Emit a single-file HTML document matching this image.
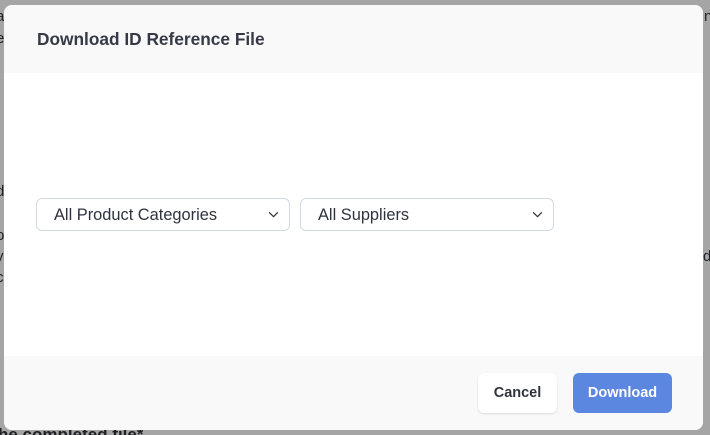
<!DOCTYPE html>
<html style="overflow:hidden;height:435px"><head><meta charset="utf-8"><style>
*{box-sizing:border-box;margin:0;padding:0}
body{width:710px;height:435px;overflow:hidden;background:#a5a5a5;font-family:"Liberation Sans",Arial,sans-serif;position:relative}
.bg{position:absolute;color:#1f2024;font-size:15px}
.modal{position:absolute;left:4px;top:5px;width:699px;height:425px;background:#fff;border-radius:8px;overflow:hidden}
.hd{height:68px;background:#f9f9f9;padding:24px 0 0 33px;font-size:17.3px;font-weight:bold;color:#363a47}
.sel{position:absolute;top:193px;height:33px;border:1px solid #d4d9e3;border-radius:6px;font-size:16.4px;color:#2f3340;padding:7px 0 0 17px}
.sel svg{position:absolute;right:10px;top:12px}
.ft{position:absolute;left:0;right:0;bottom:0;height:74px;background:#f9f9f9}
.btn{position:absolute;top:17px;height:40px;border-radius:6px;font-size:14.5px;font-weight:bold;text-align:center;line-height:40px}
</style></head><body>
<div class="bg" style="left:-4px;top:8px">a</div>
<div class="bg" style="left:-4px;top:30px">e</div>
<div class="bg" style="left:704px;top:8px">n</div>
<div class="bg" style="left:-4px;top:183px">d</div>
<div class="bg" style="left:-4px;top:227px">o</div>
<div class="bg" style="left:-4px;top:248px">y</div>
<div class="bg" style="left:-4px;top:269px">c</div>
<div class="bg" style="left:703px;top:248px">d</div>
<div class="bg" style="left:-2px;top:425px;height:10px;overflow:hidden;font-size:17px;font-weight:bold;line-height:20px">he completed file*</div>
<div class="modal">
<div class="hd">Download ID Reference File</div>
<div class="sel" style="left:32px;width:254px">All Product Categories<svg width="11" height="7" viewBox="0 0 12 8"><path d="M1 1.5l5 5 5-5" fill="none" stroke="#333" stroke-width="1.4"/></svg></div>
<div class="sel" style="left:296px;width:254px">All Suppliers<svg width="11" height="7" viewBox="0 0 12 8"><path d="M1 1.5l5 5 5-5" fill="none" stroke="#333" stroke-width="1.4"/></svg></div>
<div class="ft">
<div class="btn" style="left:474px;width:79px;background:#fff;color:#30333d;box-shadow:0 1px 2px rgba(0,0,0,.12)">Cancel</div>
<div class="btn" style="left:569px;width:99px;background:#5b87e0;color:#fff">Download</div>
</div>
</div>
</body></html>
